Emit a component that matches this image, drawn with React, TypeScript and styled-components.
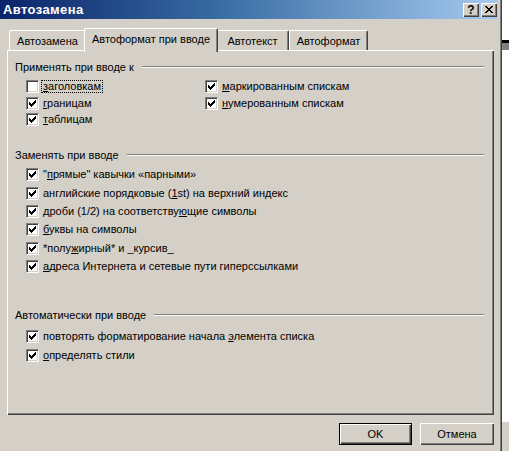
import React from "react";
import styled, { createGlobalStyle } from "styled-components";

const GlobalStyle = createGlobalStyle`
  html, body {
    margin: 0;
    padding: 0;
    background: #d4d0c8;
  }
  body {
    font-family: "Liberation Sans", Arial, sans-serif;
    font-size: 11px;
    color: #000;
    overflow: hidden;
  }
`;

const Screen = styled.div`
  display: flex;
  width: 509px;
  height: 451px;
  overflow: hidden;
`;

const Window = styled.div`
  flex: none;
  width: 502px;
  height: 451px;
  box-sizing: border-box;
  padding-right: 2px;
  background: #d4d0c8;
  border-right: 1px solid #404040;
  box-shadow: inset -1px 0 #808080;
  display: flex;
  flex-direction: column;
`;

const TitleBar = styled.div`
  height: 19px;
  margin-right: 1px;
  padding: 0 1px 0 3px;
  display: flex;
  align-items: center;
  background: linear-gradient(90deg, #0a246a 0%, #3a6ea5 45%, #a6caf0 100%);
`;

const Title = styled.span`
  flex: 1;
  color: #fff;
  font-weight: bold;
  font-size: 13px;
  letter-spacing: 0.4px;
`;

const CaptionButton = styled.span`
  width: 16px;
  height: 14px;
  margin-left: 2px;
  box-sizing: border-box;
  background: #d4d0c8;
  box-shadow: inset 1px 1px #fff, inset -1px -1px #404040, inset -2px -2px #808080;
  display: flex;
  align-items: center;
  justify-content: center;
  font-weight: bold;
  font-size: 12px;
  line-height: 12px;
`;

const Body = styled.div`
  flex: 1;
  padding: 9px 5px 0 7px;
  display: flex;
  flex-direction: column;
`;

const TabRow = styled.div`
  height: 22px;
  padding-left: 2px;
  display: flex;
  align-items: flex-end;
`;

const Tab = styled.div<{ $w: number; $active?: boolean }>`
  position: relative;
  z-index: ${(p) => (p.$active ? 2 : 1)};
  flex: none;
  width: ${(p) => p.$w}px;
  height: ${(p) => (p.$active ? 24 : 20)}px;
  margin: ${(p) => (p.$active ? "0 -2px -2px" : "0")};
  box-sizing: border-box;
  padding-top: 4px;
  background: #d4d0c8;
  border-left: 1px solid #fff;
  border-top: 1px solid #fff;
  border-right: 1px solid #404040;
  border-top-left-radius: 2px;
  border-top-right-radius: 2px;
  box-shadow: inset -1px 0 #808080;
  text-align: center;
  line-height: 13px;
  white-space: nowrap;
`;

const Panel = styled.div`
  height: 365px;
  box-sizing: border-box;
  padding: 10px 10px 0 8px;
  box-shadow: inset 1px 1px #fff, inset -1px -1px #404040, inset -2px -2px #808080;
  display: flex;
  flex-direction: column;
`;

const Group = styled.div<{ $top: number }>`
  margin-top: ${(p) => p.$top}px;
`;

const GroupHeader = styled.div`
  height: 13px;
  display: flex;
  align-items: center;
  white-space: nowrap;

  &::after {
    content: "";
    flex: 1;
    margin-left: 8px;
    border-top: 1px solid #808080;
    border-bottom: 1px solid #fff;
  }
`;

const Rows = styled.div<{ $gap: number; $rowH: number; $cols?: boolean }>`
  margin-top: ${(p) => p.$gap}px;
  padding-left: 11px;
  display: grid;
  grid-template-columns: ${(p) => (p.$cols ? "179px 1fr" : "1fr")};
  grid-template-rows: ${(p) => (p.$cols ? `repeat(3, ${p.$rowH}px)` : "none")};
  grid-auto-rows: ${(p) => p.$rowH}px;
  grid-auto-flow: ${(p) => (p.$cols ? "column" : "row")};
`;

const Row = styled.div`
  display: flex;
  align-items: center;
`;

const Box = styled.span`
  flex: none;
  width: 13px;
  height: 13px;
  box-sizing: border-box;
  background: #fff;
  border-top: 1px solid #808080;
  border-left: 1px solid #808080;
  border-bottom: 1px solid #fff;
  border-right: 1px solid #fff;
  box-shadow: inset 1px 1px #404040, inset -1px -1px #d4d0c8;
  display: flex;
  align-items: center;
  justify-content: center;
`;

const Label = styled.span<{ $focused?: boolean }>`
  margin-left: 2px;
  padding: 0 1px;
  height: 11px;
  line-height: 11px;
  border: 1px dotted ${(p) => (p.$focused ? "#000" : "transparent")};
  white-space: nowrap;
`;

const Key = styled.u`
  text-decoration: underline;
  text-underline-offset: 1px;
`;

const ButtonRow = styled.div`
  margin-top: 8px;
  display: flex;
  justify-content: flex-end;
  gap: 8px;
`;

const PushButton = styled.div<{ $w: number; $default?: boolean }>`
  width: ${(p) => p.$w}px;
  height: 22px;
  box-sizing: border-box;
  border: ${(p) => (p.$default ? "1px solid #000" : "none")};
  background: #d4d0c8;
  box-shadow: inset 1px 1px #fff, inset -1px -1px #404040, inset -2px -2px #808080;
  display: flex;
  align-items: center;
  justify-content: center;
`;

const Backdrop = styled.div`
  flex: 1;
  background: #fff;
  display: flex;
  flex-direction: column;
`;

const BackdropBit = styled.div<{ $h: number; $color: string }>`
  height: ${(p) => p.$h}px;
  background: ${(p) => p.$color};
`;

const CheckMark = () => (
  <svg width="7" height="7" viewBox="0 0 7 7" shapeRendering="crispEdges">
    <path
      d="M0 2h1v3H0zM1 3h1v3H1zM2 4h1v3H2zM3 3h1v3H3zM4 2h1v3H4zM5 1h1v3H5zM6 0h1v3H6z"
      fill="#000"
    />
  </svg>
);

const CloseGlyph = () => (
  <svg width="8" height="7" viewBox="0 0 8 7" shapeRendering="crispEdges">
    <path
      d="M0 0h2v1H0zM6 0h2v1H6zM1 1h2v1H1zM5 1h2v1H5zM2 2h4v1H2zM3 3h2v1H3zM2 4h4v1H2zM1 5h2v1H1zM5 5h2v1H5zM0 6h2v1H0zM6 6h2v1H6z"
      fill="#000"
    />
  </svg>
);

type Item = { label: React.ReactNode; checked: boolean; focused?: boolean };

const Check = ({ item }: { item: Item }) => (
  <Row>
    <Box>{item.checked && <CheckMark />}</Box>
    <Label $focused={item.focused}>{item.label}</Label>
  </Row>
);

const applyItems: Item[] = [
  { label: <><Key>з</Key>аголовкам</>, checked: false, focused: true },
  { label: <><Key>г</Key>раницам</>, checked: true },
  { label: <><Key>т</Key>аблицам</>, checked: true },
  { label: <><Key>м</Key>аркированным спискам</>, checked: true },
  { label: <><Key>н</Key>умерованным спискам</>, checked: true },
];

const replaceItems: Item[] = [
  { label: <>"<Key>п</Key>рямые" кавычки «парными»</>, checked: true },
  { label: <>английские порядковые (<Key>1</Key>st) на верхний индекс</>, checked: true },
  { label: <>дроби (1/2) на соответству<Key>ю</Key>щие символы</>, checked: true },
  { label: <><Key>б</Key>уквы на символы</>, checked: true },
  { label: <>*полу<Key>ж</Key>ирный* и _курсив_</>, checked: true },
  { label: <><Key>а</Key>дреса Интернета и сетевые пути гиперссылками</>, checked: true },
];

const autoItems: Item[] = [
  { label: <>повторять форматирование начала <Key>э</Key>лемента списка</>, checked: true },
  { label: <><Key>о</Key>пределять стили</>, checked: true },
];

const tabs = [
  { label: "Автозамена", w: 77 },
  { label: "Автоформат при вводе", w: 134, active: true },
  { label: "Автотекст", w: 73 },
  { label: "Автоформат", w: 79 },
];

export default function App() {
  return (
    <>
      <GlobalStyle />
      <Screen>
        <Window>
          <TitleBar>
            <Title>Автозамена</Title>
            <CaptionButton>?</CaptionButton>
            <CaptionButton>
              <CloseGlyph />
            </CaptionButton>
          </TitleBar>
          <Body>
            <TabRow>
              {tabs.map((t) => (
                <Tab key={t.label} $w={t.w} $active={t.active}>
                  {t.label}
                </Tab>
              ))}
            </TabRow>
            <Panel>
              <Group $top={0}>
                <GroupHeader>Применять при вводе к</GroupHeader>
                <Rows $gap={5} $rowH={16.7} $cols>
                  {applyItems.map((it, i) => (
                    <Check key={i} item={it} />
                  ))}
                </Rows>
              </Group>
              <Group $top={20.5}>
                <GroupHeader>Заменять при вводе</GroupHeader>
                <Rows $gap={4} $rowH={18.33}>
                  {replaceItems.map((it, i) => (
                    <Check key={i} item={it} />
                  ))}
                </Rows>
              </Group>
              <Group $top={33}>
                <GroupHeader>Автоматически при вводе</GroupHeader>
                <Rows $gap={6} $rowH={18.33}>
                  {autoItems.map((it, i) => (
                    <Check key={i} item={it} />
                  ))}
                </Rows>
              </Group>
            </Panel>
            <ButtonRow>
              <PushButton $w={73} $default>
                OK
              </PushButton>
              <PushButton $w={74}>Отмена</PushButton>
            </ButtonRow>
          </Body>
        </Window>
        <Backdrop>
          <BackdropBit $h={40} $color="#fff" />
          <BackdropBit $h={3} $color="#000" />
          <BackdropBit $h={7} $color="#808080" />
          <BackdropBit $h={372} $color="#fff" />
          <BackdropBit $h={29} $color="#d4d0c8" />
        </Backdrop>
      </Screen>
    </>
  );
}
